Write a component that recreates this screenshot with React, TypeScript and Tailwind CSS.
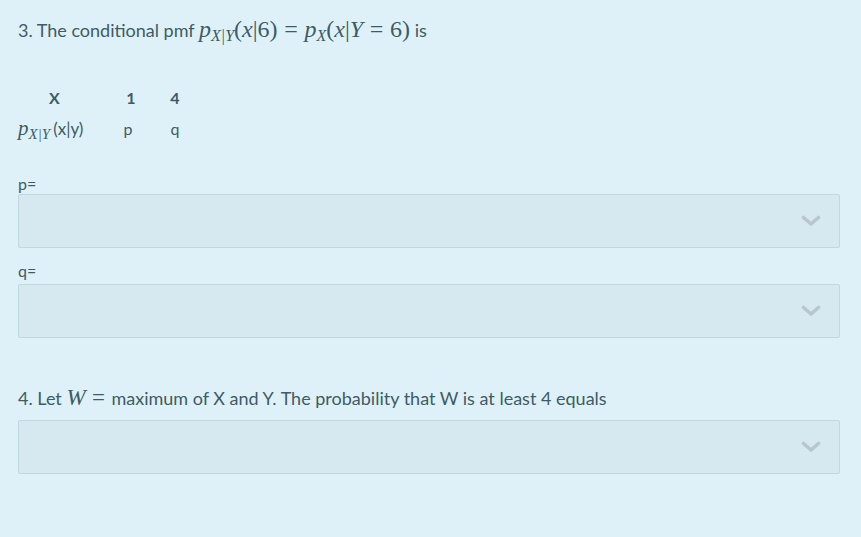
import React from "react";

const serif = { fontFamily: '"Liberation Serif", "DejaVu Serif", serif' };

const Chevron = () => (
  <svg width="20" height="12" viewBox="0 0 20 12" className="shrink-0">
    <path d="M2.5 2.5 L10 9 L17.5 2.5" fill="none" stroke="#b9c6ce" strokeWidth="3.6" strokeLinecap="round" strokeLinejoin="round" />
  </svg>
);

const SelectBox = () => (
  <div className="h-[54px] w-full bg-[#d6e9f0] border border-[#c3d7df] rounded-[2px] flex items-center justify-end pr-[18px]">
    <Chevron />
  </div>
);

const M = ({ children }: { children: React.ReactNode }) => (
  <span className="italic" style={serif}>{children}</span>
);
const R = ({ children }: { children: React.ReactNode }) => (
  <span style={serif}>{children}</span>
);
const Eq = () => <span className="mx-[0.28em]" style={serif}>=</span>;
const Sub = ({ children, size }: { children: React.ReactNode; size: string }) => (
  <sub className={`italic ${size}`} style={serif}>{children}</sub>
);

export default function App() {
  return (
    <div
      className="w-[861px] h-[537px] bg-[#dff1f8] text-[#3e5b67] pl-[18px] pr-[21px] pt-[18px] overflow-hidden"
      style={{ fontFamily: 'Lato, "Open Sans", sans-serif' }}
    >
      <div className="h-[24px] text-[18px] leading-[24px] whitespace-nowrap">
        3. The conditional pmf{" "}
        <span className="text-[24px] leading-[0]">
          <M>p</M>
          <Sub size="text-[16px]">X|Y</Sub>
          <R>(</R><M>x</M><R>|6)</R><Eq /><M>p</M>
          <Sub size="text-[16px]">X</Sub>
          <R>(</R><M>x</M><R>|</R><M>Y</M><Eq /><R>6)</R>
        </span>{" "}
        is
      </div>

      <div className="mt-[40px] flex flex-col text-[16px] leading-[31px]">
        <div className="flex h-[31px]">
          <div className="w-[92px] font-bold pl-[31px]">X</div>
          <div className="w-[42px] font-bold text-center">1</div>
          <div className="w-[46px] font-bold text-center">4</div>
        </div>
        <div className="flex h-[31px]">
          <div className="w-[92px] whitespace-nowrap">
            <span className="text-[21px] italic leading-[0]" style={serif}>p</span>
            <Sub size="text-[15px]">X|Y</Sub>
            <span className="ml-[3px] text-[17px]">(x|y)</span>
          </div>
          <div className="w-[42px] text-center pr-[6px]">p</div>
          <div className="w-[46px] text-center">q</div>
        </div>
      </div>

      <div className="mt-[30px] text-[16px] leading-[20px] h-[20px]">p=</div>
      <SelectBox />

      <div className="mt-[13px] text-[16px] leading-[20px] h-[20px]">q=</div>
      <div className="mt-[3px]">
        <SelectBox />
      </div>

      <div className="mt-[48px] h-[24px] text-[18px] leading-[24px] whitespace-nowrap">
        4. Let{" "}
        <span className="text-[23px] leading-[0]">
          <M>W</M>
          <Eq />
        </span>
        maximum of X and Y. The probability that W is at least 4 equals
      </div>
      <div className="mt-[10px]">
        <SelectBox />
      </div>
    </div>
  );
}
